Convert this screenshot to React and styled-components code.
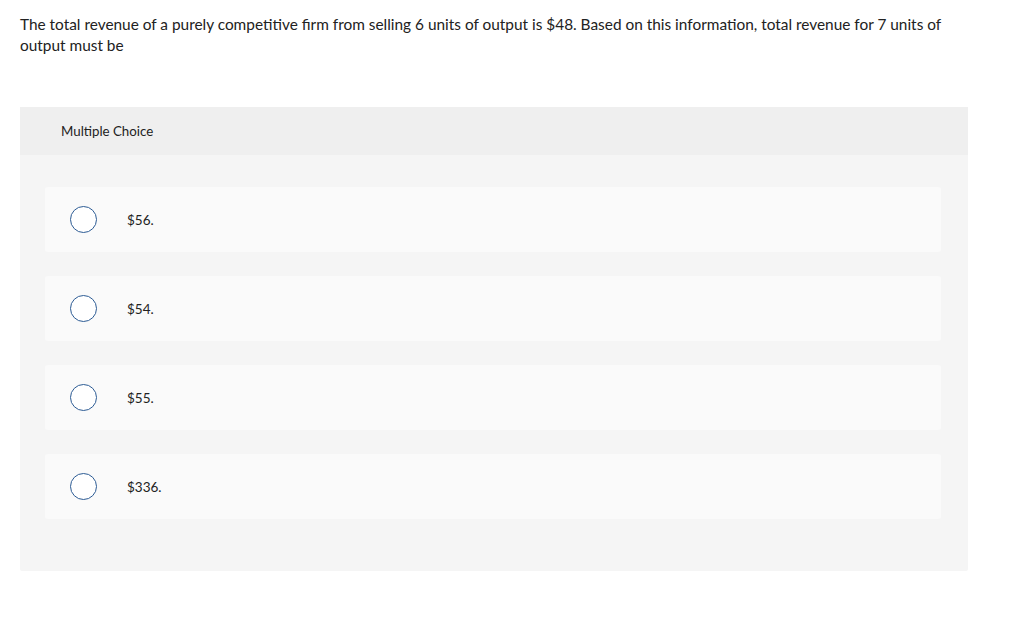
import React from "react";
import styled, { createGlobalStyle } from "styled-components";

const Global = createGlobalStyle`
  html, body { margin: 0; padding: 0; background: #fff; }
  body { font-family: Lato, "Noto Sans", Arial, sans-serif; color: #222; }
`;

const Page = styled.div`
  padding: 14px 20px 0 20px;
  width: 948px;
`;

const Question = styled.p`
  margin: 0;
  font-size: 15.4px;
  line-height: 21px;
  color: #222;
  padding-right: 10px;
`;

const Panel = styled.section`
  margin-top: 51px;
  background: #f5f5f5;
  border-radius: 2px;
  display: flex;
  flex-direction: column;
`;

const Header = styled.div`
  height: 48px;
  display: flex;
  align-items: center;
  padding-left: 41px;
  background: #efefef;
  font-size: 13.3px;
  color: #222;
`;

const Options = styled.div`
  display: flex;
  flex-direction: column;
  gap: 24px;
  padding: 32px 27px 52px 25px;
`;

const Option = styled.label`
  height: 65px;
  display: flex;
  align-items: center;
  background: #fafafa;
  border-radius: 3px;
  padding-left: 25px;
  cursor: pointer;
`;

const Radio = styled.span`
  width: 25px;
  height: 25px;
  border: 1px solid #2c5b94;
  border-radius: 50%;
  background: #fff;
  flex: none;
`;

const OptionText = styled.span`
  margin-left: 30px;
  font-size: 13.5px;
  color: #222;
`;

const choices = ["$56.", "$54.", "$55.", "$336."];

export default function App() {
  return (
    <>
      <Global />
      <Page>
        <Question>
          The total revenue of a purely competitive firm from selling 6 units of output is $48. Based on this information, total revenue for 7 units of output must be
        </Question>
        <Panel>
          <Header>Multiple Choice</Header>
          <Options>
            {choices.map((c) => (
              <Option key={c}>
                <Radio />
                <OptionText>{c}</OptionText>
              </Option>
            ))}
          </Options>
        </Panel>
      </Page>
    </>
  );
}
